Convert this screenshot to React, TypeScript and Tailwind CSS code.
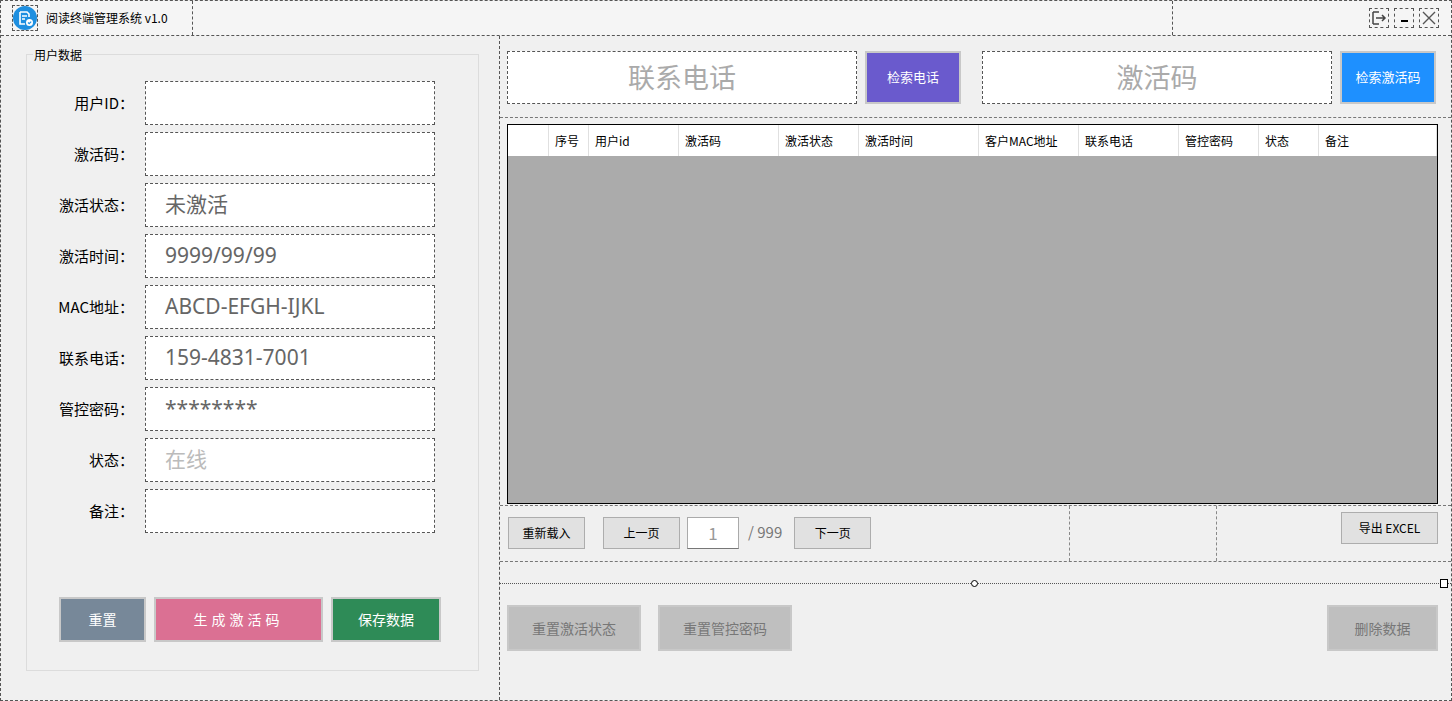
const font = { fontFamily: '"Microsoft YaHei", "Noto Sans CJK SC", "Liberation Sans", sans-serif' }

const fields: [string, string, string][] = [
  ["用户ID：", "", ""],
  ["激活码：", "", ""],
  ["激活状态：", "未激活", "text-[#666]"],
  ["激活时间：", "9999/99/99", "text-[#666]"],
  ["MAC地址：", "ABCD-EFGH-IJKL", "text-[#666]"],
  ["联系电话：", "159-4831-7001", "text-[#666]"],
  ["管控密码：", "********", "text-[#666]"],
  ["状态：", "在线", "text-[#bbb]"],
  ["备注：", "", ""],
]

const cols: [string, number][] = [
  ["", 41], ["序号", 40], ["用户id", 90], ["激活码", 100], ["激活状态", 80],
  ["激活时间", 120], ["客户MAC地址", 100], ["联系电话", 100], ["管控密码", 80], ["状态", 60], ["备注", 118],
]

function GrayBtn({ label, w, cls = "" }: { label: string; w: number; cls?: string }) {
  return (
    <div style={{ width: w }} className={`h-8 flex items-center justify-center border border-[#adadad] bg-[#e1e1e1] text-[12px] text-black ${cls}`}>
      {label}
    </div>
  )
}

export default function App() {
  return (
    <div style={font} className="w-[1452px] h-[701px] bg-[#f0f0f0] border border-dashed border-[#555] flex flex-col overflow-hidden">
      {/* title bar */}
      <div className="h-[35px] bg-[#f5f5f5] border-b border-dashed border-[#555] flex shrink-0">
        <div className="w-[192px] border-r border-dashed border-[#555] flex items-center pl-[11px] gap-[8px]">
          <div className="w-[26px] h-[26px] border border-dashed border-[#555] flex items-center justify-center">
            <svg width="24" height="24" viewBox="0 0 24 24">
              <circle cx="12" cy="12" r="12" fill="#1e8fe0" />
              <path d="M7 6h7l2 2v3M7 6v12h5M9 10h5M9 13h3" stroke="#fff" strokeWidth="1.6" fill="none" />
              <circle cx="16.5" cy="16.5" r="3.5" fill="#fff" />
              <path d="M15 16.5l1.2 1.2 2-2" stroke="#1e8fe0" strokeWidth="1.2" fill="none" />
            </svg>
          </div>
          <span className="text-[12px] text-black">阅读终端管理系统 v1.0</span>
        </div>
        <div className="w-[980px] border-r border-dashed border-[#555]" />
        <div className="flex-1 flex items-center justify-end gap-[5px] pr-[12px]">
          <div className="w-[20px] h-[20px] border border-dashed border-[#555] flex items-center justify-center">
            <svg width="16" height="14" viewBox="0 0 16 14"><path d="M2 1v12M2 1h6M2 13h6M5 7h9M11 4l3 3-3 3" stroke="#444" strokeWidth="1.5" fill="none" /></svg>
          </div>
          <div className="w-[20px] h-[20px] border border-dashed border-[#555] flex items-center justify-center">
            <div className="w-[7px] h-[2px] bg-black mt-[6px]" />
          </div>
          <div className="w-[20px] h-[20px] border border-dashed border-[#555] flex items-center justify-center">
            <svg width="16" height="16" viewBox="0 0 16 16"><path d="M2 2l12 12M14 2L2 14" stroke="#555" strokeWidth="1.4" /></svg>
          </div>
        </div>
      </div>

      <div className="flex flex-1 min-h-0">
        {/* left */}
        <div className="w-[499px] border-r border-dashed border-[#555] pl-[25px] pt-[18px] shrink-0">
          <div className="relative w-[453px] h-[617px] border border-[#dcdcdc] pt-[26px]">
            <span className="absolute -top-[9px] left-[6px] bg-[#f0f0f0] px-[1px] text-[12px] text-black">用户数据</span>
            <div className="flex flex-col gap-[7px]">
              {fields.map(([l, v, c]) => (
                <div key={l} className="flex items-center h-[44px]">
                  <div className="w-[116px] text-right text-[15px] text-black pr-[9px]">{l}</div>
                  <div className={`w-[290px] h-[44px] ml-[2px] bg-white border border-dashed border-[#555] flex items-center pl-[19px] text-[21px] ${c}`} style={{ fontFamily: '"Noto Sans", "Noto Sans CJK SC", sans-serif' }}>
                    {v}
                  </div>
                </div>
              ))}
            </div>
            <div className="flex gap-[8px] ml-[32px] mt-[64px]">
              <div className="w-[87px] h-[45px] bg-[#778899] border-2 border-[#c8c8c8] flex items-center justify-center text-white text-[14px]">重置</div>
              <div className="w-[169px] h-[45px] bg-[#db7093] border-2 border-[#c8c8c8] flex items-center justify-center text-white text-[14px] tracking-[4px]">生成激活码</div>
              <div className="w-[110px] h-[45px] bg-[#2e8b57] border-2 border-[#c8c8c8] flex items-center justify-center text-white text-[14px]">保存数据</div>
            </div>
          </div>
        </div>

        {/* right */}
        <div className="flex-1 flex flex-col">
          <div className="h-[82px] border-b border-dashed border-[#777] flex items-center pl-[7px] pt-[1px]">
            <div className="w-[350px] h-[53px] bg-white border border-dashed border-[#555] flex items-center justify-center text-[27px] text-[#aaa]">联系电话</div>
            <div className="ml-[8px] w-[96px] h-[53px] border-2 border-[#c8c8c8] bg-[#6a5acd] flex items-center justify-center text-white text-[13px]">检索电话</div>
            <div className="ml-[21px] w-[350px] h-[53px] bg-white border border-dashed border-[#555] flex items-center justify-center text-[27px] text-[#aaa]">激活码</div>
            <div className="ml-[8px] w-[96px] h-[53px] border-2 border-[#c8c8c8] bg-[#1e90ff] flex items-center justify-center text-white text-[13px]">检索激活码</div>
          </div>
          <div className="h-[388px] border-b border-dashed border-[#777] pl-[7px] pt-[6px]">
            <div className="w-[931px] h-[380px] border border-black bg-[#ababab] flex flex-col">
              <div className="h-[31px] bg-white flex text-[12px] text-black">
                {cols.map(([t, w], i) => (
                  <div key={i} style={{ width: w }} className="border-r border-[#e0e0e0] flex items-center pl-[6px] shrink-0">{t}</div>
                ))}
              </div>
            </div>
          </div>
          <div className="h-[56px] border-b border-dashed border-[#777] flex">
            <div className="w-[570px] border-r border-dashed border-[#888] flex items-center gap-[7px] pl-[8px] pb-[2px]">
              <GrayBtn label="重新载入" w={77} />
              <GrayBtn label="上一页" w={77} cls="ml-[11px]" />
              <div className="w-[52px] h-8 bg-white border border-[#aaa] border-b-[#777] flex items-center justify-center text-[17px] text-[#999]">1</div>
              <span className="text-[15px] text-[#777] mx-[2px]">/ 999</span>
              <GrayBtn label="下一页" w={77} cls="ml-[3px]" />
            </div>
            <div className="w-[147px] border-r border-dashed border-[#888]" />
            <div className="flex-1 flex justify-end pr-[13px] pt-[6px]">
              <GrayBtn label="导出 EXCEL" w={97} />
            </div>
          </div>
          <div className="h-[22px] relative border-b border-dotted border-[#555]">
            <div className="absolute left-[471px] -bottom-[4px] w-[7px] h-[7px] rounded-full border border-black bg-white" />
            <div className="absolute right-[3px] -bottom-[5px] w-[8px] h-[9px] border border-black bg-white" />
          </div>
          <div className="flex-1 flex items-start pt-[21px] pl-[7px] pr-[13px]">
            <div className="w-[134px] h-[46px] border-2 border-[#c8c8c8] bg-[#bfbfbf] flex items-center justify-center text-[14px] text-[#777]">重置激活状态</div>
            <div className="ml-[17px] w-[134px] h-[46px] border-2 border-[#c8c8c8] bg-[#bfbfbf] flex items-center justify-center text-[14px] text-[#777]">重置管控密码</div>
            <div className="ml-auto w-[111px] h-[46px] border-2 border-[#c8c8c8] bg-[#bfbfbf] flex items-center justify-center text-[14px] text-[#777]">删除数据</div>
          </div>
        </div>
      </div>
    </div>
  )
}
